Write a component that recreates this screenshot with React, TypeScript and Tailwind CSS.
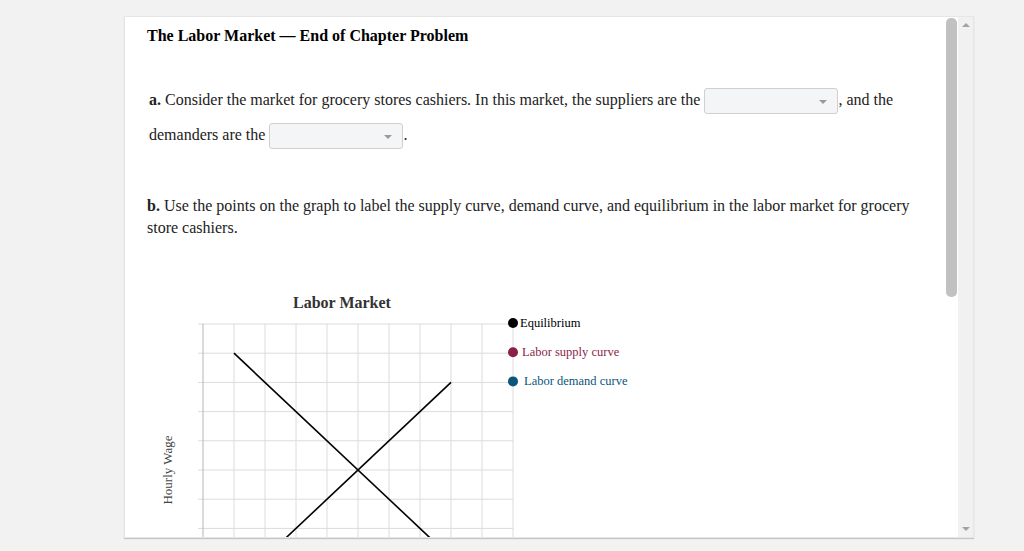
import React from "react";

function Select() {
  return (
    <span className="inline-flex align-middle items-center justify-end w-[134px] h-[26px] pr-[10px] rounded-[3px] border border-[#cfcfcf] bg-[#f4f5f7]">
      <span className="mt-[2px] w-0 h-0 border-l-[4px] border-r-[4px] border-t-[4px] border-l-transparent border-r-transparent border-t-[#9a9a9a]" />
    </span>
  );
}

function Chart() {
  const x0 = 56;
  const y0 = 44;
  const dx = 31;
  const dy = 29.2;
  const X = (c: number) => x0 + c * dx;
  const Y = (r: number) => y0 + r * dy;
  const cols = Array.from({ length: 11 }, (_, i) => i);
  const rows = Array.from({ length: 11 }, (_, i) => i);
  return (
    <svg width="600" height="300" className="block" style={{ fontFamily: '"Liberation Serif", "Times New Roman", serif' }}>
      <text x="195" y="28" textAnchor="middle" fontSize="16" fontWeight="bold" fill="#333">
        Labor Market
      </text>
      {rows.map((r) => (
        <line key={"h" + r} x1={x0 - 5} x2={X(10)} y1={Y(r)} y2={Y(r)} stroke="#dcdcdc" strokeWidth="1" />
      ))}
      {cols.map((c) => (
        <line
          key={"v" + c}
          x1={X(c)}
          x2={X(c)}
          y1={Y(0)}
          y2={Y(10)}
          stroke={c === 0 ? "#b5b5b5" : "#dcdcdc"}
          strokeWidth="1"
        />
      ))}
      <line x1={X(1)} y1={Y(1)} x2={X(9)} y2={Y(9)} stroke="#000" strokeWidth="1.6" />
      <line x1={X(8)} y1={Y(2)} x2={X(1)} y2={Y(9)} stroke="#000" strokeWidth="1.6" />
      <text x="0" y="0" transform="translate(25 190) rotate(-90)" textAnchor="middle" fontSize="13" fill="#444">
        Hourly Wage
      </text>
      <circle cx={X(10)} cy={Y(0) - 1} r="5" fill="#000" />
      <text x={373} y={Y(0) + 3} fontSize="12.5" fill="#000">
        Equilibrium
      </text>
      <circle cx={X(10)} cy={Y(1) - 1} r="5" fill="#8a1f47" />
      <text x={375} y={Y(1) + 3} fontSize="12.5" fill="#8a1f47">
        Labor supply curve
      </text>
      <circle cx={X(10)} cy={Y(2) - 1} r="5" fill="#0b5579" />
      <text x={377} y={Y(2) + 3} fontSize="12.5" fill="#0b5579">
        Labor demand curve
      </text>
    </svg>
  );
}

export default function App() {
  return (
    <div
      className="w-[1024px] h-[551px] bg-[#f2f2f2] overflow-hidden pt-[16px] pl-[124px]"
      style={{ fontFamily: '"Liberation Serif", "Times New Roman", serif' }}
    >
      <div className="relative flex w-[850px] h-[522px] bg-white border border-[#e6e6e6] shadow-[0_1px_1px_rgba(0,0,0,0.18)] overflow-hidden">
        <div className="flex-1 overflow-hidden pl-[22px] pr-[22px] pt-[9px] text-[#222]">
          <div className="text-[16px] leading-[20px] font-bold text-black">The Labor Market — End of Chapter Problem</div>
          <p className="mt-[36px] pl-[2px] text-[16px] leading-[35px]">
            <b>a.</b> Consider the market for grocery stores cashiers. In this market, the suppliers are the{" "}
            <Select />, and the demanders are the <Select />.
          </p>
          <p className="mt-[43px] text-[16px] leading-[22px]">
            <b>b.</b> Use the points on the graph to label the supply curve, demand curve, and equilibrium in the labor
            market for grocery store cashiers.
          </p>
          <div className="mt-[41px]">
            <Chart />
          </div>
        </div>
        <div className="absolute left-[821px] top-[1px] w-[11px] h-[279px] rounded-[5px] bg-[#c1c1c1]" />
        <div className="flex flex-col items-center justify-between w-[15px] h-full py-[6px] bg-[#f1f1f1]">
          <span className="w-0 h-0 border-l-[4px] border-r-[4px] border-b-[4px] border-l-transparent border-r-transparent border-b-[#a3a3a3]" />
          <span className="w-0 h-0 border-l-[4px] border-r-[4px] border-t-[4px] border-l-transparent border-r-transparent border-t-[#a3a3a3]" />
        </div>
      </div>
    </div>
  );
}
